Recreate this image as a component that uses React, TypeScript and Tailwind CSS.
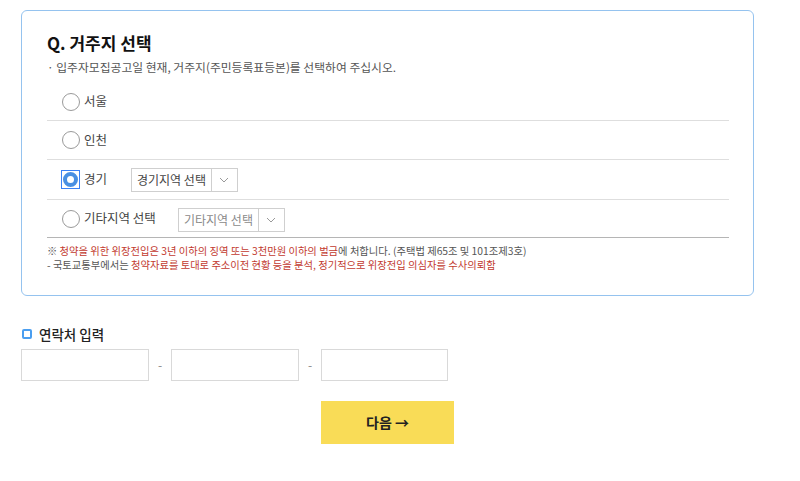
import { useState } from "react";

const font = { fontFamily: '"Noto Sans CJK KR", "Noto Sans", sans-serif' };

const Radio = ({ checked }: { checked: boolean }) =>
  checked ? (
    <span className="-ml-[1px] flex h-[19px] w-[19px] items-center justify-center border border-[#3b82f6] bg-white">
      <span className="h-[15px] w-[15px] rounded-full border-[4px] border-[#4a90e2] bg-white" />
    </span>
  ) : (
    <span className="block h-[18px] w-[18px] rounded-full border border-[#9a9a9a] bg-white" />
  );

const Select = ({ label, muted }: { label: string; muted?: boolean }) => (
  <div className="flex h-[24px] w-[107px] items-stretch border border-[#cfcfcf] bg-white">
    <span
      className={`flex flex-1 items-center whitespace-nowrap px-[5px] text-[12px] ${
        muted ? "text-[#8a8a8a]" : "text-[#444]"
      }`}
    >
      {label}
    </span>
    <span className="flex w-[27px] items-center justify-center border-l border-[#cfcfcf]">
      <svg width="10" height="6" viewBox="0 0 10 6" fill="none">
        <path d="M1 1l4 4 4-4" stroke="#999" strokeWidth="1" />
      </svg>
    </span>
  </div>
);

const regions = [
  { name: "서울", h: "h-[38px]", lw: "" },
  { name: "인천", h: "h-[39px]", lw: "" },
  { name: "경기", h: "h-[40px]", lw: "w-[47px]", select: "경기지역 선택" },
  { name: "기타지역 선택", h: "h-[38px]", lw: "w-[94px]", select: "기타지역 선택", muted: true },
];

export default function App() {
  const [selected, setSelected] = useState(2);

  return (
    <div className="min-h-[481px] w-[800px] bg-white text-[#222]" style={font}>
      <div className="ml-[21px] mt-[10px] w-[733px] rounded-[6px] border border-[#95c3ef] pb-[23px] pl-[25px] pr-[24px] pt-[19px]">
        <h2 className="text-[17px] font-bold leading-[26px] text-[#111]">Q. 거주지 선택</h2>
        <p className="mt-[2px] text-[11.8px] leading-[18px] text-[#555]">
          · 입주자모집공고일 현재, 거주지(주민등록표등본)를 선택하여 주십시오.
        </p>
        <div className="mt-[7px]">
          {regions.map((r, i) => (
            <div
              key={r.name}
              onClick={() => setSelected(i)}
              className={`flex items-center border-b pl-[15px] ${r.h} ${
                i === regions.length - 1 ? "border-[#b5b5b5]" : "border-[#dedede]"
              }`}
            >
              <Radio checked={selected === i} />
              <span className={`ml-[4px] whitespace-nowrap text-[12.5px] text-[#444] ${r.lw}`}>
                {r.name}
              </span>
              {r.select && (
                <div className={i === 2 ? "mt-[1px]" : "mt-[3px]"}>
                  <Select label={r.select} muted={r.muted} />
                </div>
              )}
            </div>
          ))}
        </div>
        <div className="mt-[6px] text-[10.3px] leading-[14px] text-[#555]">
          <p>
            ※{" "}
            <span className="text-[#c23a2f]">
              청약을 위한 위장전입은 3년 이하의 징역 또는 3천만원 이하의 벌금
            </span>
            에 처합니다. (주택법 제65조 및 101조제3호)
          </p>
          <p>
            - 국토교통부에서는{" "}
            <span className="text-[#c23a2f]">
              청약자료를 토대로 주소이전 현황 등을 분석, 정기적으로 위장전입 의심자를 수사의뢰함
            </span>
          </p>
        </div>
      </div>

      <div className="ml-[21px] mt-[28px]">
        <div className="flex items-center">
          <span className="ml-[1px] block h-[10px] w-[10px] rounded-[2px] border-[2px] border-[#4a9ef0] bg-white" />
          <span className="ml-[7px] text-[13.5px] font-medium leading-[20px] text-[#222]">
            연락처 입력
          </span>
        </div>
        <div className="mt-[5px] flex items-center">
          <input className="h-[32px] w-[128px] border border-[#d9d9d9] outline-none" />
          <span className="w-[22px] text-center text-[12px] text-[#888]">-</span>
          <input className="h-[32px] w-[128px] border border-[#d9d9d9] outline-none" />
          <span className="w-[22px] text-center text-[12px] text-[#888]">-</span>
          <input className="h-[32px] w-[127px] border border-[#d9d9d9] outline-none" />
        </div>
        <div className="mt-[20px] flex">
          <button className="ml-[300px] flex h-[43px] w-[133px] items-center justify-center bg-[#f9dc57] text-[14px] font-bold text-[#222]">
            다음 →
          </button>
        </div>
      </div>
    </div>
  );
}
